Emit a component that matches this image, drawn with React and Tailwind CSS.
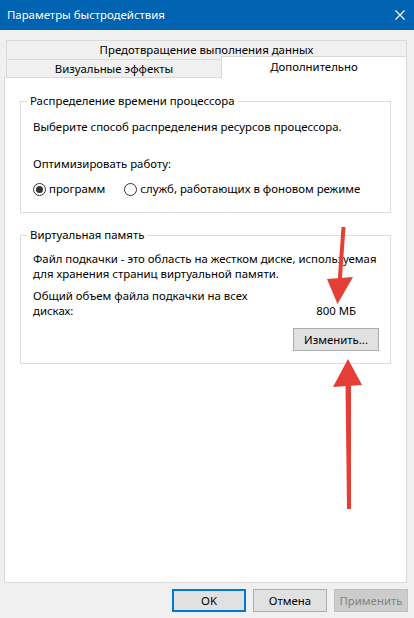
import React from "react";

function Radio({ checked }) {
  return (
    <span className="flex h-[13px] w-[13px] items-center justify-center rounded-full border border-[#333333] bg-white">
      {checked && <span className="h-[7px] w-[7px] rounded-full bg-[#333333]" />}
    </span>
  );
}

export default function App() {
  return (
    <div className="relative h-[618px] w-[414px] overflow-hidden whitespace-nowrap bg-[#f0f0f0] font-[family-name:'Noto_Sans',sans-serif] text-[11.4px] leading-[16px] text-black">
      {/* title bar */}
      <div className="flex h-[30px] items-center justify-between bg-[#0063b1] pl-[7px] pr-[9px] text-white">
        <span>Параметры быстродействия</span>
        <svg width="10" height="10" viewBox="0 0 10 10">
          <path d="M0.5 0.5 L9.5 9.5 M9.5 0.5 L0.5 9.5" stroke="white" strokeWidth="1.1" />
        </svg>
      </div>

      {/* tabs */}
      <div className="pt-[10px]">
        <div className="ml-[6px] flex h-[18px] w-[401px] items-center justify-center border border-b-0 border-[#d9d9d9] bg-[#f0f0f0]">
          Предотвращение выполнения данных
        </div>
        <div className="-mt-[2px] flex items-end">
          <div className="ml-[6px] flex h-[18px] w-[215px] items-center justify-center border border-b-0 border-r-0 border-[#d9d9d9] bg-[#f0f0f0]">
            Визуальные эффекты
          </div>
          <div className="relative z-10 -mb-[1px] flex h-[22px] w-[186px] items-start justify-center border border-b-0 border-[#d9d9d9] bg-white pt-[2px]">
            Дополнительно
          </div>
        </div>

        {/* panel */}
        <div className="ml-[4px] h-[506px] w-[403px] border border-[#d9d9d9] bg-white px-[15px] pt-[15px]">
          <fieldset className="border border-[#dcdcdc] pb-[15px] pl-[12px] pr-[11px]">
            <legend className="-ml-[6px] px-[3px]">Распределение времени процессора</legend>
            <div className="mt-[10px]">Выберите способ распределения ресурсов процессора.</div>
            <div className="mt-[21px]">Оптимизировать работу:</div>
            <div className="mt-[9px] flex items-center">
              <Radio checked />
              <span className="ml-[3px]">программ</span>
              <span className="ml-[19px]">
                <Radio />
              </span>
              <span className="ml-[3px]">служб, работающих в фоновом режиме</span>
            </div>
          </fieldset>

          <fieldset className="mt-[14px] border border-[#dcdcdc] pb-[12px] pl-[12px] pr-[11px]">
            <legend className="-ml-[6px] px-[3px]">Виртуальная память</legend>
            <div className="mt-[8px] leading-[15px]">
              Файл подкачки - это область на жестком диске, используемая
              <br />
              для хранения страниц виртуальной памяти.
            </div>
            <div className="mt-[7px] flex items-end justify-between leading-[15px]">
              <div>
                Общий объем файла подкачки на всех
                <br />
                дисках:
              </div>
              <div className="mr-[23px]">800 МБ</div>
            </div>
            <div className="mt-[10px] flex justify-end">
              <button className="flex h-[23px] w-[86px] items-center justify-center border border-[#adadad] bg-[#e1e1e1]">
                Изменить...
              </button>
            </div>
          </fieldset>
        </div>

        {/* bottom buttons */}
        <div className="mt-[6px] flex justify-end pr-[6px]">
          <button className="flex h-[23px] w-[74px] items-center justify-center border-2 border-[#0078d7] bg-[#e1e1e1]">
            OK
          </button>
          <button className="ml-[7px] flex h-[23px] w-[74px] items-center justify-center border border-[#adadad] bg-[#e1e1e1]">
            Отмена
          </button>
          <button className="ml-[7px] flex h-[23px] w-[74px] items-center justify-center border border-[#bfbfbf] bg-[#cccccc] text-[#838383]">
            Применить
          </button>
        </div>
      </div>

      {/* red arrows overlay */}
      <svg className="pointer-events-none absolute left-0 top-0" width="414" height="618" viewBox="0 0 414 618">
        <polygon points="341.5,227 345.5,227 341.5,284 337.5,284" fill="#e53e36" />
        <polygon points="327,279 353,277 337.5,304" fill="#e53e36" />
        <polygon points="348,359 333,387 362,385" fill="#e53e36" />
        <polygon points="345.5,384 351,384 351,509 347,509" fill="#e53e36" />
      </svg>
    </div>
  );
}
